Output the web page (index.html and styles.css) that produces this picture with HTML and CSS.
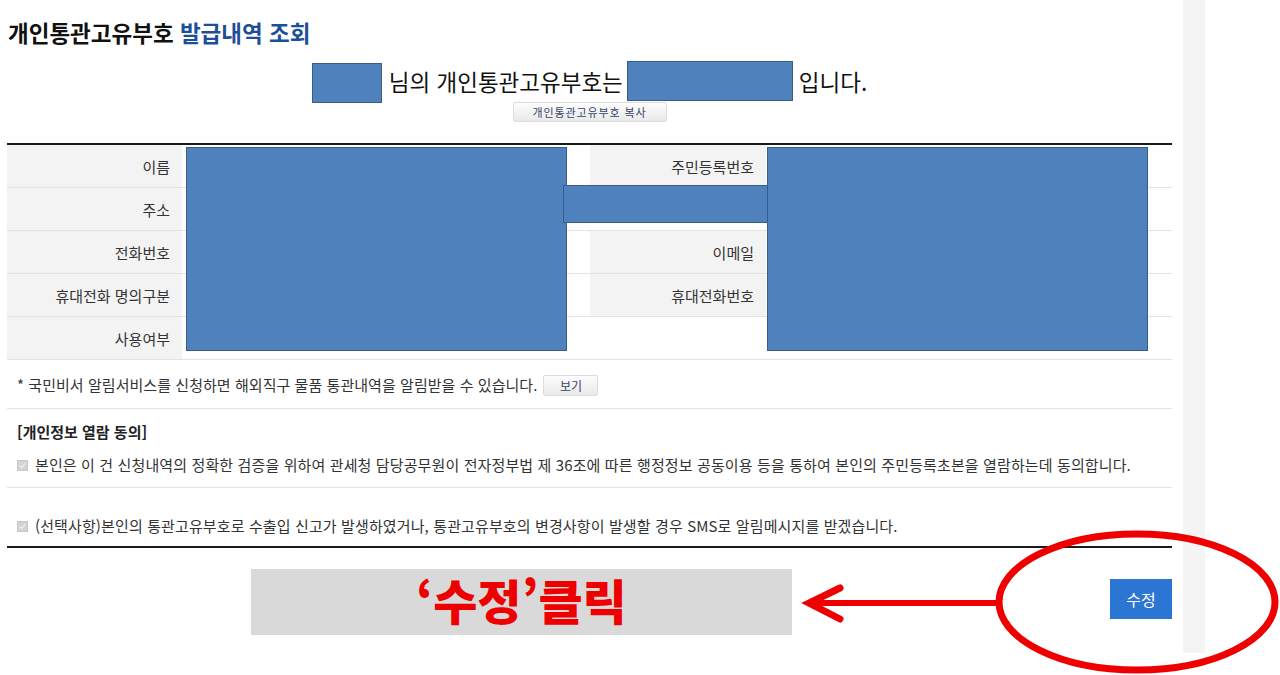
FILE: index.html
```html
<!DOCTYPE html>
<html lang="ko">
<head>
<meta charset="utf-8">
<title>개인통관고유부호 발급내역 조회</title>
<link rel="stylesheet" href="styles.css">
</head>
<body>
<div class="page">
  <main class="main">
    <h1 class="title">개인통관고유부호 <span class="title-blue">발급내역 조회</span></h1>

    <div class="result-line">
      <span class="redact redact-name"></span>
      <span class="result-text">님의 개인통관고유부호는</span>
      <span class="redact redact-code"></span>
      <span class="result-text">입니다.</span>
    </div>
    <div class="copy-row">
      <button class="btn-light btn-copy">개인통관고유부호 복사</button>
    </div>

    <div class="table-wrap">
      <table class="info">
        <colgroup>
          <col class="c-label"><col class="c-value"><col class="c-label2"><col class="c-value2">
        </colgroup>
        <tr>
          <th>이름</th><td></td><th>주민등록번호</th><td></td>
        </tr>
        <tr>
          <th>주소</th><td colspan="3"></td>
        </tr>
        <tr>
          <th>전화번호</th><td></td><th>이메일</th><td></td>
        </tr>
        <tr>
          <th>휴대전화 명의구분</th><td></td><th>휴대전화번호</th><td></td>
        </tr>
        <tr>
          <th>사용여부</th><td colspan="3"></td>
        </tr>
      </table>
      <span class="redact box-a"></span>
      <span class="redact box-b"></span>
      <span class="redact box-c"></span>
    </div>

    <div class="notice">
      <span>* 국민비서 알림서비스를 신청하면 해외직구 물품 통관내역을 알림받을 수 있습니다.</span>
      <button class="btn-light btn-view">보기</button>
    </div>

    <div class="consent">
      <div class="consent-title">[개인정보 열람 동의]</div>
      <label class="check-line">
        <svg class="chk" width="11" height="11" viewBox="0 0 11 11"><rect x="0.5" y="0.5" width="10" height="10" fill="#d3d3d3" stroke="#c8c8c8"/><path d="M2.5 5.6 L4.5 7.6 L8.6 3.2" fill="none" stroke="#ececec" stroke-width="1.4"/></svg>
        <span>본인은 이 건 신청내역의 정확한 검증을 위하여 관세청 담당공무원이 전자정부법 제 36조에 따른 행정정보 공동이용 등을 통하여 본인의 주민등록초본을 열람하는데 동의합니다.</span>
      </label>
    </div>
    <div class="consent2">
      <label class="check-line">
        <svg class="chk" width="11" height="11" viewBox="0 0 11 11"><rect x="0.5" y="0.5" width="10" height="10" fill="#d3d3d3" stroke="#c8c8c8"/><path d="M2.5 5.6 L4.5 7.6 L8.6 3.2" fill="none" stroke="#ececec" stroke-width="1.4"/></svg>
        <span>(선택사항)본인의 통관고유부호로 수출입 신고가 발생하였거나, 통관고유부호의 변경사항이 발생할 경우 SMS로 알림메시지를 받겠습니다.</span>
      </label>
    </div>

    <div class="actions">
      <button class="btn-primary">수정</button>
    </div>
  </main>
  <aside class="strip"></aside>
</div>

<div class="callout">‘수정’클릭</div>
<svg class="annot" width="480" height="145" viewBox="0 0 480 145">
  <ellipse cx="337" cy="72" rx="138" ry="68" fill="none" stroke="#ee0000" stroke-width="7"/>
  <line x1="12" y1="73" x2="199" y2="73" stroke="#ee0000" stroke-width="6"/>
  <polyline points="40,58 9,73 40,89" fill="none" stroke="#ee0000" stroke-width="7" stroke-linecap="round" stroke-linejoin="miter"/>
</svg>
</body>
</html>
```
FILE: styles.css
```css
html, body {
  margin: 0;
  padding: 0;
  background: #fff;
}
body {
  font-family: "Noto Sans CJK KR", "Noto Sans", sans-serif;
  color: #333;
  position: relative;
  width: 1280px;
  height: 675px;
  overflow: hidden;
}
.page {
  display: flex;
  align-items: flex-start;
}
.main {
  width: 1165px;
  padding: 17px 11px 0 7px;
}
.strip {
  width: 22px;
  height: 653px;
  background: #f4f4f4;
}
.title {
  margin: 0;
  font-size: 22.5px;
  line-height: 30px;
  font-weight: 700;
  color: #111;
  padding-left: 1px;
}
.title-blue {
  color: #1d4f98;
}
.result-line {
  margin-top: 12px;
  height: 43px;
  display: flex;
  justify-content: center;
  align-items: center;
  gap: 6px;
}
.result-text {
  font-size: 22.5px;
  color: #111;
  line-height: 30px;
}
.result-text + .redact-code {
  margin-left: -2px;
}
.redact {
  display: inline-block;
  background: #4f81bd;
  border: 1.5px solid #385d8a;
  box-sizing: border-box;
}
.redact-name {
  width: 70px;
  height: 40px;
  margin-top: 5px;
  margin-right: 1px;
}
.redact-code {
  width: 166px;
  height: 40px;
  margin-top: 1px;
}
.copy-row {
  display: flex;
  justify-content: center;
  height: 20px;
}
.btn-light {
  font-family: "Noto Sans CJK KR", sans-serif;
  background: linear-gradient(#fdfdfd, #e9e9e9);
  border: 1px solid #dcdcdc;
  border-radius: 2px;
  color: #34456b;
  padding: 0;
  cursor: pointer;
}
.btn-copy {
  width: 154px;
  height: 20px;
  font-size: 11px;
  letter-spacing: 0.9px;
  line-height: 18px;
}
.table-wrap {
  position: relative;
  margin-top: 21px;
}
.info {
  width: 100%;
  border-collapse: collapse;
  table-layout: fixed;
  border-top: 2px solid #1a1a1a;
}
.c-label { width: 175px; }
.c-value { width: 408px; }
.c-label2 { width: 176px; }
.c-value2 { width: 406px; }
.info th, .info td {
  height: 42px;
  padding: 0;
  border-bottom: 1px solid #e2e2e2;
}
.info th {
  background: #f3f3f3;
  font-weight: 400;
  font-size: 15px;
  color: #333;
  text-align: right;
  padding-right: 12px;
}
.box-a {
  position: absolute;
  left: 179px;
  top: 4px;
  width: 381px;
  height: 204px;
}
.box-b {
  position: absolute;
  left: 556px;
  top: 42px;
  width: 206px;
  height: 38px;
}
.box-c {
  position: absolute;
  left: 760px;
  top: 4px;
  width: 381px;
  height: 204px;
}
.notice {
  height: 48px;
  display: flex;
  align-items: center;
  padding-left: 10px;
  border-bottom: 1px solid #e3e3e3;
  font-size: 15px;
  letter-spacing: 0.05px;
  color: #333;
}
.btn-view {
  width: 55px;
  height: 21px;
  font-size: 12px;
  letter-spacing: 0;
  margin-left: 6px;
  margin-top: 2px;
}
.consent {
  border-bottom: 1px solid #e3e3e3;
  padding: 13px 0 12px 10px;
}
.consent-title {
  font-size: 15px;
  font-weight: 700;
  color: #222;
  line-height: 20px;
  margin-bottom: 13px;
}
.check-line {
  display: flex;
  align-items: center;
  gap: 7px;
  font-size: 15px;
  line-height: 20px;
  letter-spacing: 0.12px;
  color: #333;
}
.consent2 {
  padding: 28px 0 10px 10px;
  border-bottom: 2px solid #1a1a1a;
}
.actions {
  display: flex;
  justify-content: flex-end;
  margin-top: 31px;
}
.btn-primary {
  width: 62px;
  height: 40px;
  background: #2a76d2;
  border: none;
  color: #fff;
  font-family: "Noto Sans CJK KR", sans-serif;
  font-size: 16px;
  padding: 0;
}
.callout {
  position: absolute;
  left: 251px;
  top: 569px;
  width: 541px;
  height: 66px;
  box-sizing: border-box;
  padding-bottom: 6px;
  background: #d9d9d9;
  color: #ee0000;
  font-size: 48px;
  line-height: 60px;
  font-weight: 900;
  display: flex;
  justify-content: center;
  align-items: center;
}
.annot {
  position: absolute;
  left: 800px;
  top: 530px;
}
```
